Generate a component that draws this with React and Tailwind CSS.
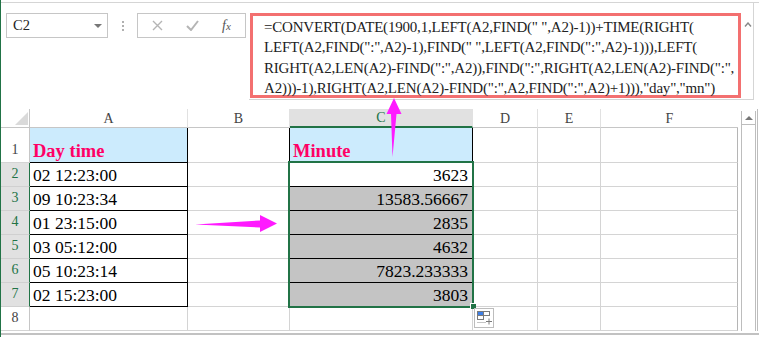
import React from 'react';

const serif = { fontFamily: '"Liberation Serif", "Times New Roman", serif' };

const formulaLines = [
  '=CONVERT(DATE(1900,1,LEFT(A2,FIND(" ",A2)-1))+TIME(RIGHT(',
  'LEFT(A2,FIND(":",A2)-1),FIND(" ",LEFT(A2,FIND(":",A2)-1))),LEFT(',
  'RIGHT(A2,LEN(A2)-FIND(":",A2)),FIND(":",RIGHT(A2,LEN(A2)-FIND(":",',
  'A2)))-1),RIGHT(A2,LEN(A2)-FIND(":",A2,FIND(":",A2)+1))),"day","mn")',
];

const rows = [
  { n: 1, a: 'Day time', c: 'Minute' },
  { n: 2, a: '02 12:23:00', c: '3623' },
  { n: 3, a: '09 10:23:34', c: '13583.56667' },
  { n: 4, a: '01 23:15:00', c: '2835' },
  { n: 5, a: '03 05:12:00', c: '4632' },
  { n: 6, a: '05 10:23:14', c: '7823.233333' },
  { n: 7, a: '02 15:23:00', c: '3803' },
  { n: 8, a: '', c: '' },
];

const FormulaBar = () => (
  <div className="h-[109px] shrink-0 flex flex-col">
    <div className="h-[2px]" />
    <div className="flex border-t border-[#d5d5d5]">
      <div className="flex items-start pt-[10px] pl-[5px]">
        <div className="w-[102px] h-[25px] border border-[#c6c6c6] flex items-center justify-between pl-[6px] pr-[5px]">
          <span className="text-[14.5px] text-[#222] leading-none">C2</span>
          <span className="w-0 h-0 border-l-[4px] border-r-[4px] border-t-[4px] border-l-transparent border-r-transparent border-t-[#777]" />
        </div>
        <div className="ml-[14px] mt-[8px] flex flex-col gap-[2px]">
          <span className="w-[2px] h-[2px] bg-[#b0b0b0]" />
          <span className="w-[2px] h-[2px] bg-[#b0b0b0]" />
          <span className="w-[2px] h-[2px] bg-[#b0b0b0]" />
        </div>
        <div className="ml-[13px] w-[109px] h-[25px] border border-[#c6c6c6] flex items-center pl-[14px] gap-[23px]">
          <svg width="11" height="11" viewBox="0 0 11 11">
            <path d="M1 1 L10 10 M10 1 L1 10" stroke="#b5b5b5" strokeWidth="1.4" />
          </svg>
          <svg width="13" height="11" viewBox="0 0 13 11">
            <path d="M1 6 L5 10 L12 1" stroke="#b5b5b5" strokeWidth="2" fill="none" />
          </svg>
          <span className="italic text-[14px] text-[#555] leading-none">
            f<span className="text-[11px]">x</span>
          </span>
        </div>
      </div>
      <div className="ml-[3px] w-[505px] h-[97px] border-r border-b border-[#d5d5d5] pl-px pt-[10px] flex items-start">
        <div className="w-[491px] h-[85px] border-[3px] border-[#f37070] pl-[11px] pt-[1px] text-[15px] tracking-[-0.2px] leading-[20.3px] text-[#222]">
          {formulaLines.map((l, i) => (
            <div key={i} className="whitespace-pre">{l}</div>
          ))}
        </div>
        <div className="ml-[3px] mt-[9px]">
          <svg width="8" height="5" viewBox="0 0 8 5">
            <path d="M1 4.5 L4 1 L7 4.5" stroke="#888" strokeWidth="1.4" fill="none" />
          </svg>
        </div>
      </div>
    </div>
  </div>
);

const ColHeaders = () => (
  <div className="h-[19px] flex text-[14px] text-[#444]">
    <div className="w-[29px] shrink-0 border-r border-b border-[#c6c6c6] flex items-end justify-end pr-[1px] pb-[2px]">
      <svg width="13" height="13" viewBox="0 0 13 13">
        <path d="M13 0 L13 13 L0 13 Z" fill="#dadada" />
      </svg>
    </div>
    <div className="w-[158px] shrink-0 border-r border-b border-r-[#e1e1e1] border-b-[#c6c6c6] flex items-center justify-center">A</div>
    <div className="w-[102px] shrink-0 border-r border-b border-r-[#e1e1e1] border-b-[#c6c6c6] flex items-center justify-center">B</div>
    <div className="w-[183px] shrink-0 bg-[#e1e1e1] border-r border-b-2 border-r-[#e1e1e1] border-b-[#217346] text-[#217346] flex items-center justify-center">C</div>
    <div className="w-[65px] shrink-0 border-r border-b border-r-[#e1e1e1] border-b-[#c6c6c6] flex items-center justify-center">D</div>
    <div className="w-[63px] shrink-0 border-r border-b border-r-[#e1e1e1] border-b-[#c6c6c6] flex items-center justify-center">E</div>
    <div className="w-[137px] shrink-0 border-b border-[#c6c6c6] flex items-center justify-center">F</div>
  </div>
);

const Row = ({ r }) => {
  const first = r.n === 1;
  const sel = r.n >= 2 && r.n <= 7;
  const inA = r.n <= 7;
  const height = first ? 'h-[35px]' : 'h-[24px]';
  const header = sel
    ? 'bg-[#e1e1e1] border-r-[#217346] border-b-[#d0d0d0] text-[#217346]'
    : 'border-r-[#c6c6c6] border-b-[#d4d4d4] text-[#444]';
  const aCls = inA
    ? 'border-r-black border-b-black'
    : 'border-r-[#d4d4d4] border-b-[#d4d4d4]';
  const bCls = first ? 'border-r-black border-b-[#d4d4d4]' : 'border-r-[#d4d4d4] border-b-[#d4d4d4]';
  let cCls = 'border-r-[#d4d4d4] border-b-[#d4d4d4]';
  if (first) cCls = 'bg-[#ccebfd] border-r-black border-b-[#d4d4d4]';
  else if (r.n === 2) cCls = 'bg-white border-r-[#d4d4d4] border-b-black';
  else if (r.n >= 3 && r.n <= 6) cCls = 'bg-[#c4c4c4] border-r-[#d4d4d4] border-b-black';
  else if (r.n === 7) cCls = 'bg-[#c4c4c4] border-r-[#d4d4d4] border-b-[#d4d4d4]';

  return (
    <div className={`${height} flex`}>
      <div className={`w-[29px] shrink-0 border-r border-b flex items-end justify-center pb-[2px] text-[14px] ${header}`}>
        {r.n}
      </div>
      <div
        className={`w-[158px] shrink-0 border-r border-b flex items-end pl-[3px] ${aCls} ${
          first ? 'bg-[#ccebfd] text-[#ff0066] font-bold text-[18.5px]' : 'text-black text-[17.5px]'
        }`}
      >
        <span className="leading-[22px]">{r.a}</span>
      </div>
      <div className={`w-[102px] shrink-0 border-r border-b ${bCls}`} />
      <div
        className={`w-[183px] shrink-0 border-r border-b flex items-end ${cCls} ${
          first
            ? 'justify-start pl-[3px] text-[#ff0066] font-bold text-[18.5px]'
            : 'justify-end pr-[4px] text-black text-[17.5px]'
        }`}
      >
        <span className="leading-[22px]">{r.c}</span>
      </div>
      <div className="w-[65px] shrink-0 border-r border-b border-[#d4d4d4]" />
      <div className="w-[63px] shrink-0 border-r border-b border-[#d4d4d4]" />
      <div className="w-[137px] shrink-0 border-r border-b border-r-[#b5b5b5] border-b-[#d4d4d4]" />
    </div>
  );
};

const PasteIcon = () => (
  <div className="absolute left-[474px] top-[308px] w-[20px] h-[20px] border border-[#bdbdbd] bg-white">
    <svg width="18" height="18" viewBox="0 0 18 18">
      <rect x="2.5" y="2.5" width="6" height="4" fill="#3d7fe6" stroke="#7a7a7a" strokeWidth="1" />
      <rect x="8.5" y="2.5" width="6" height="4" fill="white" stroke="#7a7a7a" strokeWidth="1" />
      <rect x="2.5" y="6.5" width="6" height="4" fill="white" stroke="#7a7a7a" strokeWidth="1" />
      <path d="M2.5 13.5 H11" stroke="#8a8a8a" strokeWidth="1" strokeDasharray="1 1" />
      <path d="M14 9.5 V15.5 M11 12.5 H17" stroke="#7a7a7a" strokeWidth="1" />
    </svg>
  </div>
);

export default function App() {
  return (
    <div className="relative w-[759px] h-[337px] overflow-hidden bg-white flex" style={serif}>
      <div className="w-px bg-[#217346] shrink-0" />
      <div className="flex-1 flex flex-col">
        <FormulaBar />
        <div className="flex">
          <div className="w-[737px] shrink-0 flex flex-col">
            <ColHeaders />
            {rows.map((r) => (
              <Row key={r.n} r={r} />
            ))}
          </div>
          <div className="ml-[3px] mt-[2px] w-[15px] border-l border-r border-[#bdbdbd] flex flex-col">
            <div className="h-[14px] border-b border-[#bdbdbd] flex items-center justify-center">
              <span className="w-0 h-0 border-l-[4px] border-r-[4px] border-b-[4px] border-l-transparent border-r-transparent border-b-[#777]" />
            </div>
          </div>
          <div className="ml-[1px] w-px bg-[#bdbdbd]" />
        </div>
        <div className="h-[2px] shrink-0" />
        <div className="h-[2px] shrink-0 bg-[#c2c2c2]" />
      </div>

      <div className="absolute left-[288px] top-[161px] w-[186px] h-[147px] border-2 border-[#217346]" />
      <div className="absolute left-[470px] top-[303px] w-[6px] h-[6px] bg-[#217346] border-l border-t border-white" />
      <PasteIcon />

      <svg className="absolute left-0 top-0 pointer-events-none" width="759" height="337" viewBox="0 0 759 337">
        <polygon points="195,224.5 260,220.5 260,215 277,223.5 260,232 260,227.5" fill="#ff1aff" />
        <polygon points="394,98 401.5,114 396.5,114 392.5,157 391,114 386.5,114" fill="#ff1aff" />
      </svg>
    </div>
  );
}
